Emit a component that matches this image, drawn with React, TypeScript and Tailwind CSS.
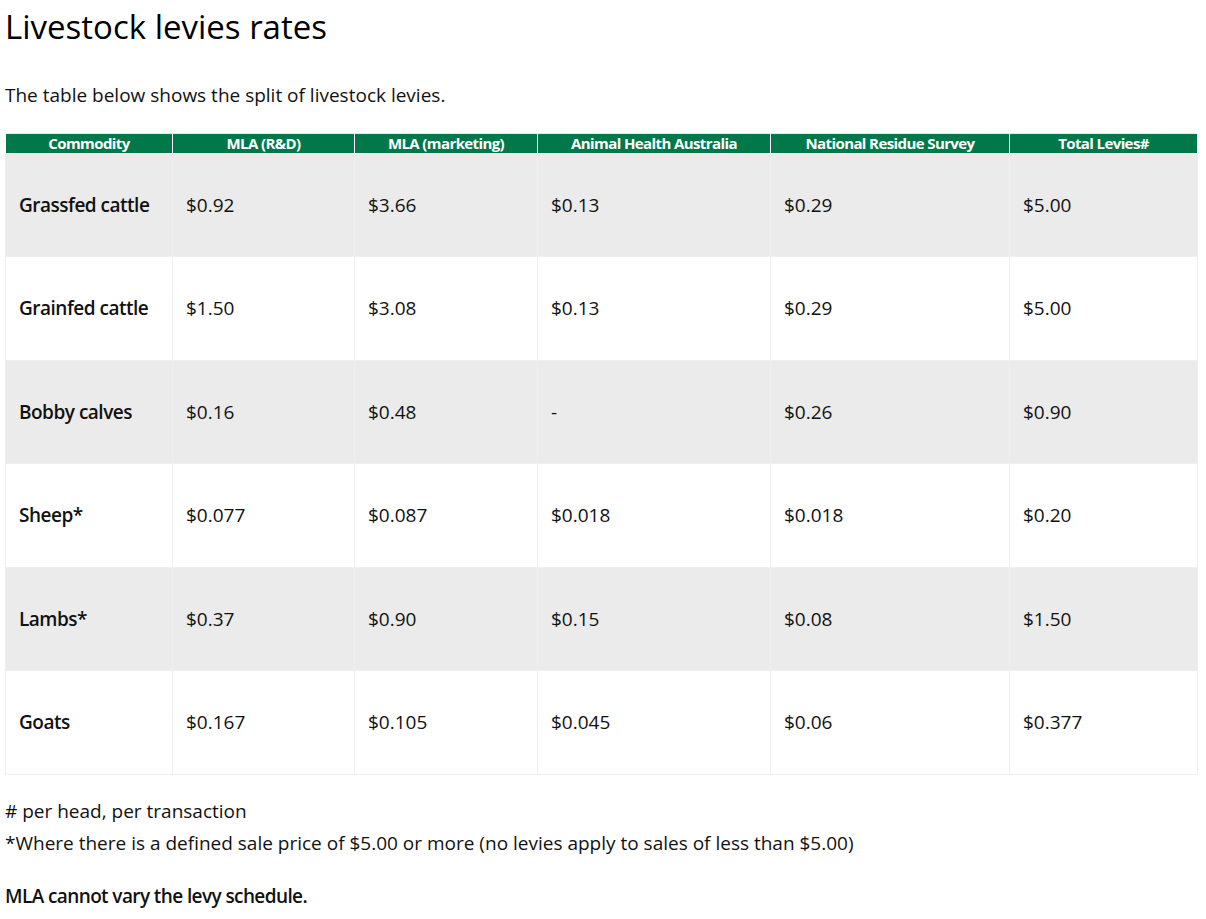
const rows = [
  { name: "Grassfed cattle", rd: "$0.92", mkt: "$3.66", aha: "$0.13", nrs: "$0.29", total: "$5.00" },
  { name: "Grainfed cattle", rd: "$1.50", mkt: "$3.08", aha: "$0.13", nrs: "$0.29", total: "$5.00" },
  { name: "Bobby calves", rd: "$0.16", mkt: "$0.48", aha: "-", nrs: "$0.26", total: "$0.90" },
  { name: "Sheep*", rd: "$0.077", mkt: "$0.087", aha: "$0.018", nrs: "$0.018", total: "$0.20" },
  { name: "Lambs*", rd: "$0.37", mkt: "$0.90", aha: "$0.15", nrs: "$0.08", total: "$1.50" },
  { name: "Goats", rd: "$0.167", mkt: "$0.105", aha: "$0.045", nrs: "$0.06", total: "$0.377" },
];

const headers = [
  "Commodity",
  "MLA (R&D)",
  "MLA (marketing)",
  "Animal Health Australia",
  "National Residue Survey",
  "Total Levies#",
];

export default function App() {
  return (
    <div className="bg-white px-[5px] pt-[8px] text-[#111] font-['Open_Sans',sans-serif]">
      <h1 className="text-[33px] leading-[38px] font-normal text-black">
        Livestock levies rates
      </h1>
      <p className="mt-[37px] text-[19px] leading-[24px]">
        The table below shows the split of livestock levies.
      </p>

      <table className="mt-[26px] w-[1192px] table-fixed border-collapse border border-[#e8e8e8] text-[19px]">
        <colgroup>
          <col className="w-[167px]" />
          <col className="w-[182px]" />
          <col className="w-[183px]" />
          <col className="w-[233px]" />
          <col className="w-[239px]" />
          <col className="w-[188px]" />
        </colgroup>
        <thead>
          <tr className="bg-[#00784a] h-[20px]">
            {headers.map((h) => (
              <th
                key={h}
                className="border-x border-white p-0 text-center text-[15px] leading-[19px] font-bold tracking-[-0.6px] text-white"
              >
                {h}
              </th>
            ))}
          </tr>
        </thead>
        <tbody>
          {rows.map((r, idx) => (
            <tr key={r.name} className={idx % 2 === 0 ? "bg-[#ebebeb] h-[103px]" : "bg-white h-[104px]"}>
              <td className="border border-[#efefef] pl-[13px] font-semibold tracking-[-0.5px]">{r.name}</td>
              <td className="border border-[#efefef] pl-[13px]">{r.rd}</td>
              <td className="border border-[#efefef] pl-[13px]">{r.mkt}</td>
              <td className="border border-[#efefef] pl-[13px]">{r.aha}</td>
              <td className="border border-[#efefef] pl-[13px]">{r.nrs}</td>
              <td className="border border-[#efefef] pl-[13px]">{r.total}</td>
            </tr>
          ))}
        </tbody>
      </table>

      <div className="mt-[20px] text-[19px] leading-[32px]">
        <p># per head, per transaction</p>
        <p>*Where there is a defined sale price of $5.00 or more (no levies apply to sales of less than $5.00)</p>
        <p className="mt-[21px] font-semibold tracking-[-0.6px]">MLA cannot vary the levy schedule.</p>
      </div>
    </div>
  );
}
